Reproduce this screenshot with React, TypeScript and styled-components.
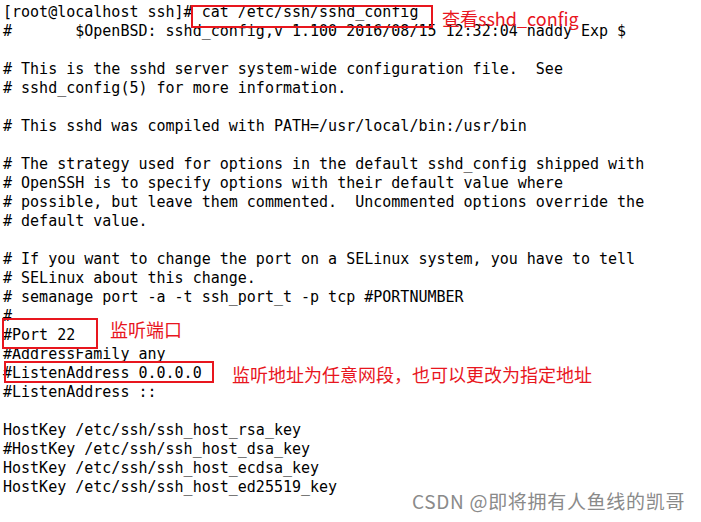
import React from "react";
import styled, { createGlobalStyle } from "styled-components";

const GlobalStyle = createGlobalStyle`
  html, body {
    margin: 0;
    padding: 0;
    background: #ffffff;
  }
`;

const Screen = styled.div`
  position: relative;
  width: 701px;
  height: 522px;
  overflow: hidden;
  background: #ffffff;
`;

const Terminal = styled.div`
  display: flex;
  flex-direction: column;
  padding: 3px 0 0 3px;
  font-family: "DejaVu Sans Mono", "Liberation Mono", monospace;
  font-size: 15px;
  line-height: 19px;
  color: #000000;
`;

const Line = styled.div`
  white-space: pre;
  height: 19px;
`;

const HighlightBox = styled.div<{ $x: number; $y: number; $w: number; $h: number }>`
  position: absolute;
  left: ${(p) => p.$x}px;
  top: ${(p) => p.$y}px;
  width: ${(p) => p.$w}px;
  height: ${(p) => p.$h}px;
  box-sizing: border-box;
  border: 2px solid #e8161e;
`;

const Note = styled.span<{ $x: number; $y: number }>`
  position: absolute;
  left: ${(p) => p.$x}px;
  top: ${(p) => p.$y}px;
  font-family: "Noto Sans CJK SC", "Noto Sans", sans-serif;
  font-size: 18px;
  line-height: 18px;
  color: #e8161e;
  white-space: nowrap;
`;

const Watermark = styled.span`
  position: absolute;
  left: 412px;
  top: 491px;
  font-family: "Noto Sans CJK SC", "Liberation Sans", sans-serif;
  font-size: 19px;
  line-height: 19px;
  letter-spacing: 0.7px;
  color: #8a8a8a;
  white-space: nowrap;
`;

const lines: string[] = [
  "[root@localhost ssh]# cat /etc/ssh/sshd_config",
  "#       $OpenBSD: sshd_config,v 1.100 2016/08/15 12:32:04 naddy Exp $",
  "",
  "# This is the sshd server system-wide configuration file.  See",
  "# sshd_config(5) for more information.",
  "",
  "# This sshd was compiled with PATH=/usr/local/bin:/usr/bin",
  "",
  "# The strategy used for options in the default sshd_config shipped with",
  "# OpenSSH is to specify options with their default value where",
  "# possible, but leave them commented.  Uncommented options override the",
  "# default value.",
  "",
  "# If you want to change the port on a SELinux system, you have to tell",
  "# SELinux about this change.",
  "# semanage port -a -t ssh_port_t -p tcp #PORTNUMBER",
  "#",
  "#Port 22",
  "#AddressFamily any",
  "#ListenAddress 0.0.0.0",
  "#ListenAddress ::",
  "",
  "HostKey /etc/ssh/ssh_host_rsa_key",
  "#HostKey /etc/ssh/ssh_host_dsa_key",
  "HostKey /etc/ssh/ssh_host_ecdsa_key",
  "HostKey /etc/ssh/ssh_host_ed25519_key",
];

const boxes = [
  { x: 191, y: 5, w: 242, h: 23 },
  { x: 2, y: 318, w: 96, h: 31 },
  { x: 4, y: 361, w: 210, h: 22 },
];

const notes = [
  { x: 442, y: 9, text: "查看sshd_config" },
  { x: 110, y: 320, text: "监听端口" },
  { x: 232, y: 365, text: "监听地址为任意网段，也可以更改为指定地址" },
];

export default function App() {
  return (
    <>
      <GlobalStyle />
      <Screen>
        <Terminal>
          {lines.map((l, i) => (
            <Line key={i}>{l}</Line>
          ))}
        </Terminal>
        {boxes.map((b, i) => (
          <HighlightBox key={i} $x={b.x} $y={b.y} $w={b.w} $h={b.h} />
        ))}
        {notes.map((n, i) => (
          <Note key={i} $x={n.x} $y={n.y}>
            {n.text}
          </Note>
        ))}
        <Watermark>CSDN @即将拥有人鱼线的凯哥</Watermark>
      </Screen>
    </>
  );
}
